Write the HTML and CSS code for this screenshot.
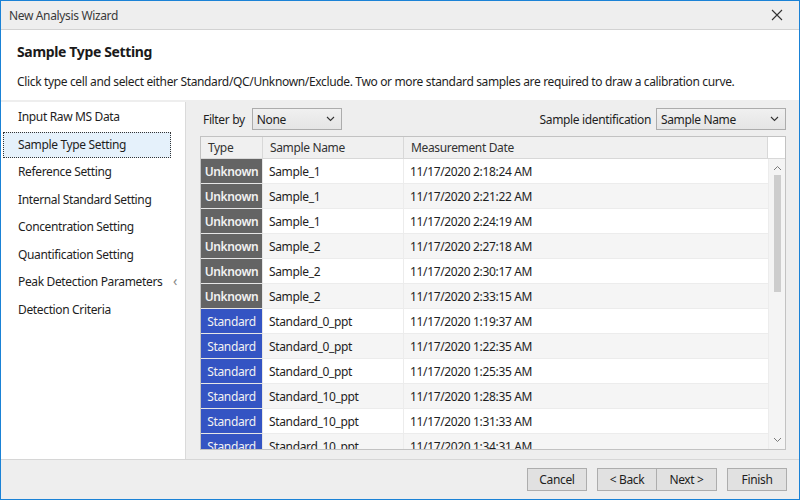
FILE: index.html
```html
<!DOCTYPE html>
<html lang="en">
<head>
    <meta charset="UTF-8">
    <title>New Analysis Wizard</title>
    <link rel="stylesheet" href="styles.css">
</head>
<body>
    <div class="window">
        <div class="titlebar">
            <span class="titlebar-text">New Analysis Wizard</span>
            <svg class="close-icon" width="12" height="12" viewBox="0 0 12 12">
                <path d="M1 1 L11 11 M11 1 L1 11" stroke="#333" stroke-width="1.1" fill="none"/>
            </svg>
        </div>

        <div class="page-header">
            <div class="page-title">Sample Type Setting</div>
            <div class="page-desc">Click type cell and select either Standard/QC/Unknown/Exclude. Two or more standard samples are required to draw a calibration curve.</div>
        </div>

        <div class="content">
            <div class="nav">
                <div class="nav-item">Input Raw MS Data</div>
                <div class="nav-item selected">Sample Type Setting</div>
                <div class="nav-item">Reference Setting</div>
                <div class="nav-item">Internal Standard Setting</div>
                <div class="nav-item">Concentration Setting</div>
                <div class="nav-item">Quantification Setting</div>
                <div class="nav-item">Peak Detection Parameters <span class="nav-arrow">&lsaquo;</span></div>
                <div class="nav-item">Detection Criteria</div>
            </div>

            <div class="main">
                <div class="toolbar">
                    <span class="label label-filter">Filter by</span>
                    <div class="combo combo-filter">
                        <span>None</span>
                        <svg width="9" height="6" viewBox="0 0 9 6"><path d="M1 1 L4.5 4.5 L8 1" stroke="#333" stroke-width="1.1" fill="none"/></svg>
                    </div>
                    <span class="spacer"></span>
                    <span class="label">Sample identification</span>
                    <div class="combo combo-ident">
                        <span>Sample Name</span>
                        <svg width="9" height="6" viewBox="0 0 9 6"><path d="M1 1 L4.5 4.5 L8 1" stroke="#333" stroke-width="1.1" fill="none"/></svg>
                    </div>
                </div>

                <div class="grid">
                    <div class="grid-head">
                        <div class="cell col-type">Type</div>
                        <div class="cell col-name">Sample Name</div>
                        <div class="cell col-date">Measurement Date</div>
                        <div class="cell col-scroll"></div>
                    </div>
                    <div class="grid-body">
                        <div class="rows" id="rows"></div>
                        <div class="scrollbar">
                            <svg class="scroll-arrow" width="9" height="6" viewBox="0 0 9 6"><path d="M1 5 L4.5 1.5 L8 5" stroke="#7a7a7a" stroke-width="1" fill="none"/></svg>
                            <div class="scroll-track">
                                <div class="scroll-thumb"></div>
                            </div>
                            <svg class="scroll-arrow" width="9" height="6" viewBox="0 0 9 6"><path d="M1 1 L4.5 4.5 L8 1" stroke="#7a7a7a" stroke-width="1" fill="none"/></svg>
                        </div>
                    </div>
                </div>
            </div>
        </div>

        <div class="footer">
            <button class="btn">Cancel</button>
            <div class="btn-pair">
                <button class="btn">&lt; Back</button>
                <button class="btn">Next &gt;</button>
            </div>
            <button class="btn">Finish</button>
        </div>
    </div>

    <script>
        // Sample list shown in the grid
        const samples = [
            ['Unknown', 'Sample_1', '11/17/2020 2:18:24 AM'],
            ['Unknown', 'Sample_1', '11/17/2020 2:21:22 AM'],
            ['Unknown', 'Sample_1', '11/17/2020 2:24:19 AM'],
            ['Unknown', 'Sample_2', '11/17/2020 2:27:18 AM'],
            ['Unknown', 'Sample_2', '11/17/2020 2:30:17 AM'],
            ['Unknown', 'Sample_2', '11/17/2020 2:33:15 AM'],
            ['Standard', 'Standard_0_ppt', '11/17/2020 1:19:37 AM'],
            ['Standard', 'Standard_0_ppt', '11/17/2020 1:22:35 AM'],
            ['Standard', 'Standard_0_ppt', '11/17/2020 1:25:35 AM'],
            ['Standard', 'Standard_10_ppt', '11/17/2020 1:28:35 AM'],
            ['Standard', 'Standard_10_ppt', '11/17/2020 1:31:33 AM'],
            ['Standard', 'Standard_10_ppt', '11/17/2020 1:34:31 AM']
        ];

        const rows = document.getElementById('rows');
        samples.forEach(([type, name, date]) => {
            const row = document.createElement('div');
            row.className = 'row';
            row.innerHTML =
                `<div class="cell col-type type-${type.toLowerCase()}">${type}</div>` +
                `<div class="cell col-name">${name}</div>` +
                `<div class="cell col-date">${date}</div>`;
            rows.appendChild(row);
        });
    </script>
</body>
</html>
```

FILE: styles.css
```css
* {
    margin: 0;
    padding: 0;
    box-sizing: border-box;
}

body {
    font-family: "Noto Sans", "Open Sans", sans-serif;
    font-size: 12px;
    letter-spacing: -0.35px;
    color: #1e1e1e;
    background: #fff;
}

.window {
    width: 800px;
    height: 500px;
    border: 1px solid #1a82d6;
    display: flex;
    flex-direction: column;
    overflow: hidden;
}

.titlebar {
    height: 29px;
    flex-shrink: 0;
    background: #eeeeee;
    border-bottom: 1px solid #d2d2d2;
    display: flex;
    align-items: center;
    justify-content: space-between;
    padding: 0 16px 0 8px;
}

.titlebar-text {
    color: #3a3a3a;
}

.close-icon {
    display: block;
}

.page-header {
    height: 70px;
    flex-shrink: 0;
    background: #fff;
    padding: 12px 16px 0 16px;
}

.page-title {
    font-size: 14px;
    font-weight: bold;
    color: #1a1a1a;
    margin-bottom: 12px;
}

.page-desc {
    color: #1e1e1e;
    white-space: nowrap;
}

.content {
    flex: 1;
    display: flex;
    background: #eeeeee;
    padding-top: 2px;
    min-height: 0;
}

.nav {
    width: 185px;
    flex-shrink: 0;
    background: #fff;
    border-right: 1px solid #dadada;
    padding: 2px 0 0 2px;
}

.nav-item {
    height: 27.5px;
    line-height: 26px;
    padding-left: 15px;
    color: #1e1e1e;
    white-space: nowrap;
    position: relative;
}

.nav-item.selected {
    width: 168px;
    background: #e5f1fb;
    outline: 1px dotted #333;
    outline-offset: -1px;
    height: 26px;
    margin-bottom: 1.5px;
}

.nav-arrow {
    position: absolute;
    left: 170px;
    top: -1px;
    color: #888;
    font-size: 14px;
}

.main {
    flex: 1;
    display: flex;
    flex-direction: column;
    padding: 6px 13px 9px 14px;
    min-width: 0;
}

.toolbar {
    height: 22px;
    display: flex;
    align-items: center;
    margin-bottom: 6px;
}

.label {
    margin: 0 5px 0 3px;
}

.label-filter {
    margin-right: 7px;
}

.spacer {
    flex: 1;
}

.combo {
    height: 22px;
    border: 1px solid #acacac;
    background: linear-gradient(#f0f0f0, #e5e5e5);
    display: flex;
    align-items: center;
    justify-content: space-between;
    padding: 0 6px 0 4px;
}

.combo-filter {
    width: 90px;
}

.combo-ident {
    width: 130px;
}

.grid {
    flex: 1;
    display: flex;
    flex-direction: column;
    border: 1px solid #c2c2c2;
    background: #fff;
    min-height: 0;
}

.grid-head {
    height: 22px;
    display: flex;
    flex-shrink: 0;
    background: #f0f0f0;
    border-bottom: 1px solid #d8d8d8;
}

.grid-head .cell {
    border-right: 1px solid #d8d8d8;
    color: #333;
    padding-left: 7px;
}

.grid-head .col-scroll {
    background: #fff;
    border-right: none;
}

.cell {
    display: flex;
    align-items: center;
    white-space: nowrap;
    overflow: hidden;
}

.col-type {
    width: 62px;
    flex-shrink: 0;
}

.col-name {
    width: 141px;
    flex-shrink: 0;
    padding-left: 6px;
}

.col-date {
    flex: 1;
    padding-left: 6px;
}

.col-scroll {
    width: 17px;
    flex-shrink: 0;
}

.grid-body {
    flex: 1;
    display: flex;
    min-height: 0;
    overflow: hidden;
}

.rows {
    flex: 1;
    overflow: hidden;
}

.row {
    height: 25px;
    display: flex;
    border-bottom: 1px solid #ececec;
    background: #fff;
}

.row:nth-child(even) {
    background: #f5f5f5;
}

.row .col-name {
    border-right: 1px solid #ececec;
}

.type-unknown,
.type-standard {
    justify-content: center;
    color: #f2f2f2;
    border-right: 1px solid #e6e6e6;
    border-bottom: 1px solid #e6e6e6;
    margin-bottom: -1px;
}

.type-unknown {
    background: #646464;
    font-weight: 600;
}

.type-standard {
    background: #3454c3;
}

.scrollbar {
    width: 17px;
    flex-shrink: 0;
    background: #f4f4f4;
    border-left: 1px solid #ececec;
    display: flex;
    flex-direction: column;
    align-items: center;
    padding: 6px 0 6px 0;
}

.scroll-arrow {
    flex-shrink: 0;
}

.scroll-track {
    flex: 1;
    width: 100%;
    padding: 4px 4px 0 5px;
}

.scroll-thumb {
    height: 117px;
    background: #cdcdcd;
}

.footer {
    height: 40px;
    flex-shrink: 0;
    background: #eeeeee;
    border-top: 1px solid #d6d6d6;
    display: flex;
    justify-content: flex-end;
    align-items: center;
    gap: 10px;
    padding: 0 12px 0 0;
}

.btn-pair {
    display: flex;
}

.btn {
    width: 60px;
    height: 23px;
    font-family: inherit;
    font-size: 12px;
    letter-spacing: -0.35px;
    color: #1e1e1e;
    background: #e1e1e1;
    border: 1px solid #adadad;
}

.btn-pair .btn + .btn {
    border-left: none;
}
```
